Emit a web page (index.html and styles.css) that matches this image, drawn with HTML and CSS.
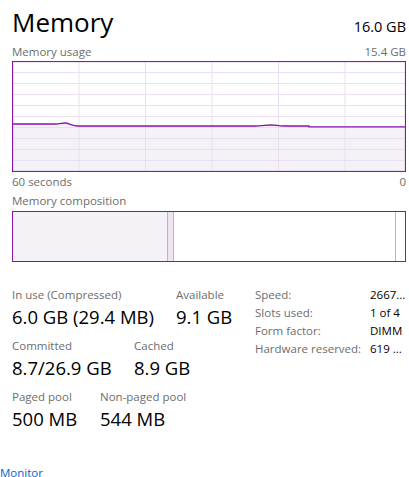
FILE: index.html
```html
<!DOCTYPE html>
<html>
<head>
<meta charset="utf-8">
<link rel="stylesheet" href="styles.css">
</head>
<body>
<div class="pane">
  <div class="head">
    <div class="title">Memory</div>
    <div class="total">16.0 GB</div>
  </div>
  <div class="caprow">
    <span>Memory usage</span>
    <span>15.4 GB</span>
  </div>
  <svg class="graph" width="394" height="111" viewBox="0 0 394 111">
    <path class="fill" d="M0,63 L43,63 C48,63 50,62 53,62 C57,62 60,65 66,65 L242,65 C250,65 254,64 259,64 C264,64 266,65 272,65 L297,65 L297,65.8 L394,65.8 L394,111 L0,111 Z"/>
    <g class="grid">
      <line x1="67" y1="0" x2="67" y2="111"/>
      <line x1="133.5" y1="0" x2="133.5" y2="111"/>
      <line x1="200" y1="0" x2="200" y2="111"/>
      <line x1="266.5" y1="0" x2="266.5" y2="111"/>
      <line x1="333" y1="0" x2="333" y2="111"/>
      <line x1="0" y1="11.5" x2="394" y2="11.5"/>
      <line x1="0" y1="22.5" x2="394" y2="22.5"/>
      <line x1="0" y1="33.5" x2="394" y2="33.5"/>
      <line x1="0" y1="44.5" x2="394" y2="44.5"/>
      <line x1="0" y1="55.5" x2="394" y2="55.5"/>
      <line x1="0" y1="66.5" x2="394" y2="66.5"/>
      <line x1="0" y1="77.5" x2="394" y2="77.5"/>
      <line x1="0" y1="88.5" x2="394" y2="88.5"/>
      <line x1="0" y1="99.5" x2="394" y2="99.5"/>
    </g>
    <path class="line" d="M0,63 L43,63 C48,63 50,62 53,62 C57,62 60,65 66,65 L242,65 C250,65 254,64 259,64 C264,64 266,65 272,65 L297,65 L297,65.8 L394,65.8"/>
    <rect class="frame" x="0.5" y="0.5" width="393" height="110"/>
  </svg>
  <div class="axis">
    <span>60 seconds</span>
    <span>0</span>
  </div>
  <div class="caption">Memory composition</div>
  <div class="comp">
    <div class="seg inuse"></div>
    <div class="seg modified"></div>
    <div class="seg standby"></div>
    <div class="seg free"></div>
  </div>
  <div class="stats">
    <div class="left">
      <div class="row">
        <div class="stat w164">
          <div class="lbl">In use (Compressed)</div>
          <div class="val">6.0 GB (29.4 MB)</div>
        </div>
        <div class="stat">
          <div class="lbl">Available</div>
          <div class="val">9.1 GB</div>
        </div>
      </div>
      <div class="row">
        <div class="stat w122">
          <div class="lbl">Committed</div>
          <div class="val">8.7/26.9 GB</div>
        </div>
        <div class="stat">
          <div class="lbl">Cached</div>
          <div class="val">8.9 GB</div>
        </div>
      </div>
      <div class="row">
        <div class="stat w88">
          <div class="lbl">Paged pool</div>
          <div class="val">500 MB</div>
        </div>
        <div class="stat">
          <div class="lbl">Non-paged pool</div>
          <div class="val">544 MB</div>
        </div>
      </div>
    </div>
    <div class="right">
      <div class="kv"><span class="k">Speed:</span><span class="v">2667...</span></div>
      <div class="kv"><span class="k">Slots used:</span><span class="v">1 of 4</span></div>
      <div class="kv"><span class="k">Form factor:</span><span class="v">DIMM</span></div>
      <div class="kv"><span class="k">Hardware reserved:</span><span class="v">619 ...</span></div>
    </div>
  </div>
  <div class="link">Monitor</div>
</div>
</body>
</html>
```

FILE: styles.css
```css
html, body {
  margin: 0;
  padding: 0;
  background: #ffffff;
  overflow: hidden;
}
body {
  font-family: "Open Sans", "Noto Sans", sans-serif;
  color: #000;
  width: 409px;
  height: 477px;
}
.pane {
  padding-left: 12px;
  width: 394px;
}
.head {
  display: flex;
  justify-content: space-between;
  align-items: baseline;
  height: 44px;
  padding-top: 4px;
  box-sizing: border-box;
}
.title {
  font-size: 26px;
  line-height: 36px;
}
.total {
  font-size: 14.5px;
  line-height: 20px;
}
.caprow, .axis {
  display: flex;
  justify-content: space-between;
  font-size: 11.5px;
  line-height: 16px;
  color: #6d6d6d;
}
.caprow {
  height: 16px;
}
.graph {
  display: block;
  margin-top: 1px;
}
.graph .fill { fill: #f4f2f6; }
.graph .grid line { stroke: #ecdef1; stroke-width: 1; }
.graph .line { fill: none; stroke: #8b12ae; stroke-width: 1.3; }
.graph .frame { fill: none; stroke: #8b12ae; stroke-width: 1.2; }
.axis {
  margin-top: 2px;
}
.caption {
  font-size: 11.5px;
  line-height: 16px;
  color: #6d6d6d;
  margin-top: 3px;
}
.comp {
  display: flex;
  height: 51px;
  box-sizing: border-box;
  border: 1.3px solid #8b12ae;
  margin-top: 2px;
}
.seg { height: 100%; }
.inuse { width: 154px; background: #f4f2f6; border-right: 1px solid #c9a9d6; }
.modified { width: 5px; background: #f0e4f3; border-right: 1px solid #c9a9d6; }
.standby { width: 221px; background: #fff; border-right: 1px solid #c9a9d6; }
.free { flex: 1; background: #fff; }
.stats {
  display: flex;
  margin-top: 25px;
}
.left {
  width: 243px;
}
.row {
  display: flex;
  margin-bottom: 7px;
}
.stat { display: flex; flex-direction: column; }
.w164 { width: 164px; }
.w122 { width: 122px; }
.w88 { width: 88px; }
.lbl {
  font-size: 11.5px;
  line-height: 16px;
  color: #6d6d6d;
}
.val {
  font-size: 18.5px;
  line-height: 28px;
}
.right {
  display: flex;
  flex-direction: column;
  margin-top: -1px;
}
.kv {
  display: flex;
  font-size: 11.5px;
  line-height: 18px;
}
.k { width: 115px; color: #6d6d6d; }
.v { color: #000; }
.link {
  margin-left: -12px;
  margin-top: 25px;
  font-size: 11.5px;
  line-height: 16px;
  color: #0066cc;
}
```
